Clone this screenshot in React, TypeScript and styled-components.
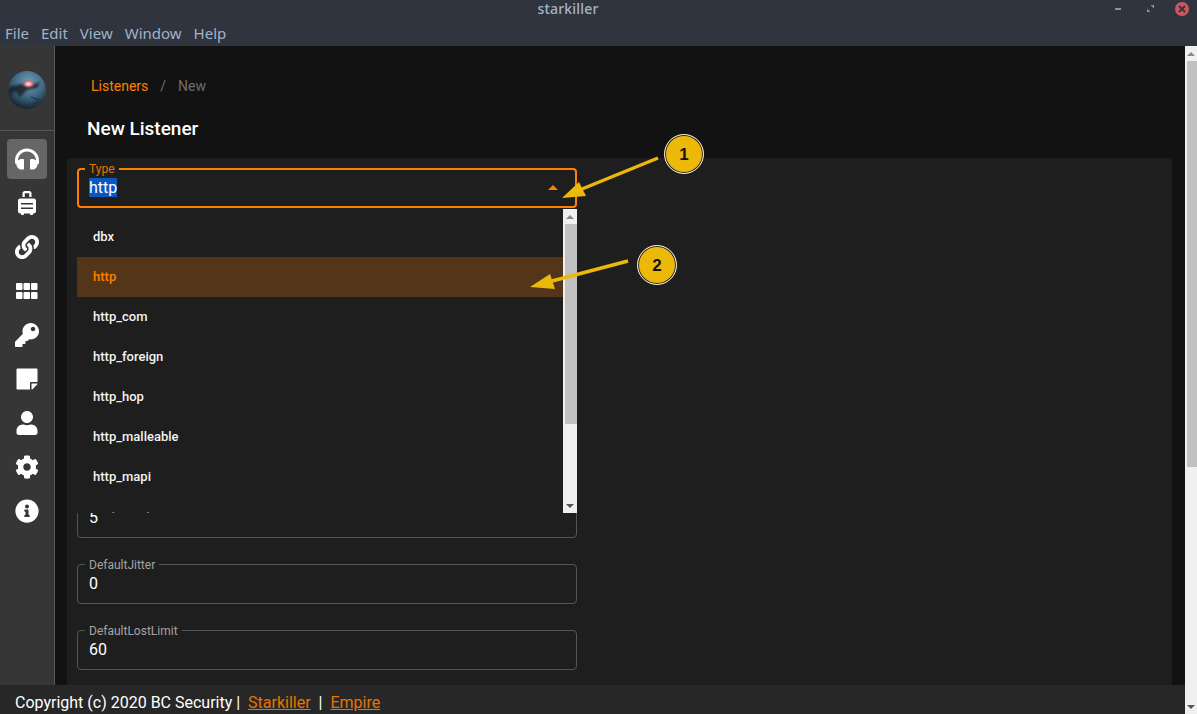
import * as React from 'react';
import styled, { createGlobalStyle } from 'styled-components';
import {
  FaCog,
  FaHeadphones,
  FaInfoCircle,
  FaKey,
  FaLink,
  FaStickyNote,
  FaSuitcaseRolling,
  FaUser,
} from 'react-icons/fa';

const ORANGE = '#ff7f00';

const GlobalStyle = createGlobalStyle`
  html, body {
    margin: 0;
    height: 100%;
    overflow: hidden;
    background: #121212;
  }
  #root {
    height: 100%;
  }
`;

const Page = styled.div`
  position: relative;
  width: 1197px;
  height: 714px;
  display: flex;
  flex-direction: column;
  overflow: hidden;
  font-family: Roboto, "Liberation Sans", sans-serif;
  color: #fff;
`;

const TitleBar = styled.div`
  height: 17px;
  display: flex;
  align-items: center;
  background: #2f343f;
`;

const Title = styled.div`
  width: 1136px;
  text-align: center;
  font-family: "Noto Sans", sans-serif;
  font-size: 14px;
  font-weight: 500;
  letter-spacing: 0.2px;
  color: #a6b4c6;
`;

const WindowButtons = styled.div`
  display: flex;
  align-items: center;
  margin-left: -21px;
  gap: 18px;
`;

const CloseButton = styled.div`
  width: 14px;
  height: 14px;
  border-radius: 50%;
  background: #cc575d;
  display: flex;
  align-items: center;
  justify-content: center;
`;

const MenuBar = styled.div`
  height: 29px;
  box-sizing: border-box;
  padding: 3px 0 0 5px;
  display: flex;
  align-items: center;
  gap: 12px;
  background: #2f343f;
  font-family: "Noto Sans", sans-serif;
  font-size: 15px;
  color: #a2b2c8;
`;

const Desktop = styled.div`
  flex: 1;
  display: flex;
  min-height: 0;
`;

const Column = styled.div`
  width: 1185px;
  display: flex;
  flex-direction: column;
`;

const Body = styled.div`
  flex: 1;
  display: flex;
  min-height: 0;
`;

const Sidebar = styled.nav`
  width: 54px;
  flex: none;
  border-right: 1px solid #5a5a5a;
  background: #363636;
  display: flex;
  flex-direction: column;
  align-items: center;
`;

const AvatarSlot = styled.div`
  width: 100%;
  height: 85px;
  box-sizing: border-box;
  padding-top: 4px;
  flex: none;
  display: flex;
  align-items: center;
  justify-content: center;
  border-bottom: 1px solid #555;
  margin-bottom: 8px;
`;

const NavItem = styled.div<{ $active?: boolean }>`
  width: 40px;
  height: 40px;
  flex: none;
  margin-bottom: 4px;
  display: flex;
  align-items: center;
  justify-content: center;
  border-radius: 4px;
  font-size: 24px;
  color: #fff;
  background: ${props => (props.$active ? '#666' : 'transparent')};
`;

const Main = styled.main`
  flex: 1;
  min-width: 0;
  background: #121212;
  padding: 0 13px 0 12px;
  overflow: hidden;
`;

const Breadcrumbs = styled.div`
  height: 40px;
  margin-top: 20px;
  padding-left: 24px;
  display: flex;
  align-items: center;
  font-size: 14px;
`;

const Crumb = styled.span`
  color: ${ORANGE};
`;

const CrumbSep = styled.span`
  color: #6e6e6e;
  padding: 0 12px;
`;

const CrumbCurrent = styled.span`
  color: #6e6e6e;
`;

const Heading = styled.h1`
  margin: 6px 0 14px;
  height: 32px;
  padding-left: 20px;
  display: flex;
  align-items: center;
  font-size: 19px;
  font-weight: 500;
  color: #fff;
`;

const Card = styled.section`
  position: relative;
  padding: 10px;
  background: #1e1e1e;
  border-radius: 4px;
  display: flex;
  flex-direction: column;
  align-items: flex-start;
  gap: 26px;
  height: 600px;
`;

const Field = styled.div<{ $focused?: boolean }>`
  position: relative;
  width: 500px;
  height: 40px;
  flex: none;
  box-sizing: border-box;
  display: flex;
  align-items: center;
  padding: 0 ${props => (props.$focused ? '10px' : '11px')} 2px;
  border: ${props => (props.$focused ? `2px solid ${ORANGE}` : '1px solid #555')};
  border-radius: 4px;
  font-size: 16px;
  color: #fff;
`;

const FieldLabel = styled.label<{ $focused?: boolean }>`
  position: absolute;
  top: ${props => (props.$focused ? '-8px' : '-7px')};
  left: ${props => (props.$focused ? '6px' : '7px')};
  padding: 0 4px;
  background: #1e1e1e;
  font-size: 12px;
  line-height: 14px;
  color: ${props => (props.$focused ? '#e87400' : '#a4a4a4')};
`;

const Selected = styled.span`
  background: #0a57c2;
  color: #fff;
`;

const Caret = styled.span`
  position: absolute;
  right: 17px;
  top: 15px;
  width: 0;
  height: 0;
  border-left: 5px solid transparent;
  border-right: 5px solid transparent;
  border-bottom: 5px solid ${ORANGE};
`;

const Menu = styled.div`
  position: absolute;
  left: 10px;
  top: 51px;
  width: 500px;
  height: 304px;
  display: flex;
  background: #1e1e1e;
  overflow: hidden;
  z-index: 2;
`;

const MenuList = styled.ul`
  flex: 1;
  margin: 0;
  padding: 8px 0 0;
  list-style: none;
`;

const MenuRow = styled.li<{ $selected?: boolean }>`
  height: 40px;
  box-sizing: border-box;
  display: flex;
  align-items: center;
  padding: 0 0 2px 16px;
  font-size: 13px;
  font-weight: 500;
  color: ${props => (props.$selected ? ORANGE : '#f2f2f2')};
  background: ${props => (props.$selected ? '#53351a' : 'transparent')};
`;

const Scrollbar = styled.div<{ $width: number }>`
  width: ${props => props.$width}px;
  flex: none;
  box-sizing: border-box;
  display: flex;
  flex-direction: column;
  align-items: stretch;
  background: #f0f0f0;
`;

const ScrollArrow = styled.div<{ $down?: boolean }>`
  height: 15px;
  flex: none;
  display: flex;
  align-items: center;
  justify-content: center;
  &::before {
    content: '';
    width: 0;
    height: 0;
    border-left: 4px solid transparent;
    border-right: 4px solid transparent;
    ${props => (props.$down ? 'border-top: 4px solid #555;' : 'border-bottom: 4px solid #888;')}
  }
`;

const ScrollThumb = styled.div<{ $height: number }>`
  height: ${props => props.$height}px;
  flex: none;
  margin-left: 2px;
  background: #c1c1c1;
`;

const ScrollTrack = styled.div`
  flex: 1;
`;

const Footer = styled.footer`
  height: 29px;
  box-sizing: border-box;
  padding: 5px 0 0 15px;
  flex: none;
  display: flex;
  align-items: center;
  background: #272727;
  font-size: 16px;
  color: #fff;
  white-space: pre;
`;

const FooterLink = styled.a`
  color: #e87400;
  text-decoration: underline;
`;

const ArrowLayer = styled.svg`
  position: absolute;
  left: 0;
  top: 0;
  width: 1197px;
  height: 714px;
  z-index: 5;
  pointer-events: none;
`;

const Badge = styled.div<{ $x: number; $y: number }>`
  position: absolute;
  left: ${props => props.$x - 20}px;
  top: ${props => props.$y - 20}px;
  width: 40px;
  height: 40px;
  box-sizing: border-box;
  padding-top: 1px;
  z-index: 6;
  display: flex;
  align-items: center;
  justify-content: center;
  border-radius: 50%;
  border: 1px solid #e8e8e8;
  background: #ecb80a;
  box-shadow: inset 0 0 0 1px #222;
  color: #111;
  font-family: "Liberation Sans", sans-serif;
  font-size: 17px;
  font-weight: 700;
`;

const Avatar = () => (
  <svg width="40" height="40" viewBox="0 0 40 40">
    <defs>
      <radialGradient id="globe" cx="0.55" cy="0.3" r="0.72">
        <stop offset="0" stopColor="#6fa0b8" />
        <stop offset="0.55" stopColor="#3d6680" />
        <stop offset="1" stopColor="#141e2a" />
      </radialGradient>
      <radialGradient id="eye" cx="0.5" cy="0.5" r="0.5">
        <stop offset="0" stopColor="#fff" />
        <stop offset="0.4" stopColor="#ff8f98" />
        <stop offset="1" stopColor="#d0303c" stopOpacity="0" />
      </radialGradient>
      <filter id="soft">
        <feGaussianBlur stdDeviation="1" />
      </filter>
    </defs>
    <circle cx="20" cy="20" r="19" fill="url(#globe)" />
    <path
      d="M2 17 L14 14 L24 15 L33 12 L30 18 L20 20 L13 27 L8 21 L3 25 Z"
      fill="#14181e"
      opacity="0.75"
      filter="url(#soft)"
    />
    <path d="M24 27 L32 30 L26 35" fill="none" stroke="#1e2a36" strokeWidth="1.2" opacity="0.8" />
    <ellipse cx="21.5" cy="14" rx="7" ry="4.5" fill="url(#eye)" />
  </svg>
);

// two rows of three rounded blocks, the apps icon of the sidebar
const AppsIcon = () => (
  <svg width="22" height="16" viewBox="0 0 22 16" fill="#fff">
    {[0, 9].map(y =>
      [0, 7.5, 15].map(x => <rect key={`${x}-${y}`} x={x} y={y} width="6.5" height="7" rx="1" />),
    )}
  </svg>
);

const navIcons = [
  FaHeadphones,
  FaSuitcaseRolling,
  FaLink,
  AppsIcon,
  FaKey,
  FaStickyNote,
  FaUser,
  FaCog,
  FaInfoCircle,
];

const listenerTypes = ['dbx', 'http', 'http_com', 'http_foreign', 'http_hop', 'http_malleable', 'http_mapi', 'meterpreter'];

const options = [
  { label: 'Name', value: '' },
  { label: 'Host', value: '' },
  { label: 'Port', value: '' },
  { label: 'StagingKey', value: '' },
  { label: 'DefaultDelay', value: '5' },
  { label: 'DefaultJitter', value: '0' },
  { label: 'DefaultLostLimit', value: '60' },
];

export default function App() {
  return (
    <Page>
      <GlobalStyle />
      <TitleBar>
        <Title>starkiller</Title>
        <WindowButtons>
          <svg width="6" height="2" viewBox="0 0 6 2">
            <rect width="6" height="2" fill="#8d929c" />
          </svg>
          <svg width="7" height="7" viewBox="0 0 8 8" style={{ margin: '0 3px 0 8px' }}>
            <path d="M4 0H8V4ZM0 4L4 8H0Z" fill="#8d929c" />
          </svg>
          <CloseButton>
            <svg width="8" height="8" viewBox="0 0 8 8">
              <path d="M1 1L7 7M7 1L1 7" stroke="#2f343f" strokeWidth="1.8" />
            </svg>
          </CloseButton>
        </WindowButtons>
      </TitleBar>
      <MenuBar>
        <span>File</span>
        <span>Edit</span>
        <span>View</span>
        <span>Window</span>
        <span>Help</span>
      </MenuBar>
      <Desktop>
        <Column>
          <Body>
            <Sidebar>
              <AvatarSlot>
                <Avatar />
              </AvatarSlot>
              {navIcons.map((Icon, i) => (
                <NavItem key={i} $active={i === 0}>
                  <Icon />
                </NavItem>
              ))}
            </Sidebar>
            <Main>
              <Breadcrumbs>
                <Crumb>Listeners</Crumb>
                <CrumbSep>/</CrumbSep>
                <CrumbCurrent>New</CrumbCurrent>
              </Breadcrumbs>
              <Heading>New Listener</Heading>
              <Card>
                <Field $focused>
                  <FieldLabel $focused>Type</FieldLabel>
                  <Selected>http</Selected>
                  <Caret />
                </Field>
                <Menu>
                  <MenuList>
                    {listenerTypes.map(type => (
                      <MenuRow key={type} $selected={type === 'http'}>
                        {type}
                      </MenuRow>
                    ))}
                  </MenuList>
                  <Scrollbar $width={14}>
                    <ScrollArrow />
                    <ScrollThumb $height={200} />
                    <ScrollTrack />
                    <ScrollArrow $down />
                  </Scrollbar>
                </Menu>
                {options.map(option => (
                  <Field key={option.label}>
                    <FieldLabel>{option.label}</FieldLabel>
                    {option.value}
                  </Field>
                ))}
              </Card>
            </Main>
          </Body>
          <Footer>
            Copyright (c) 2020 BC Security |  <FooterLink>Starkiller</FooterLink>  |  <FooterLink>Empire</FooterLink>
          </Footer>
        </Column>
        <Scrollbar $width={12}>
          <ScrollArrow />
          <ScrollThumb $height={406} />
          <ScrollTrack />
          <ScrollArrow $down />
        </Scrollbar>
      </Desktop>
      <ArrowLayer viewBox="0 0 1197 714">
        <path d="M658 158L582 189" stroke="#ecb80a" strokeWidth="3.5" />
        <path d="M562 198L579 182L586 196Z" fill="#ecb80a" />
        <path d="M628 261L552 281" stroke="#ecb80a" strokeWidth="3.5" />
        <path d="M530 287L550 274L555 289Z" fill="#ecb80a" />
      </ArrowLayer>
      <Badge $x={684} $y={154}>1</Badge>
      <Badge $x={657} $y={265}>2</Badge>
    </Page>
  );
}
